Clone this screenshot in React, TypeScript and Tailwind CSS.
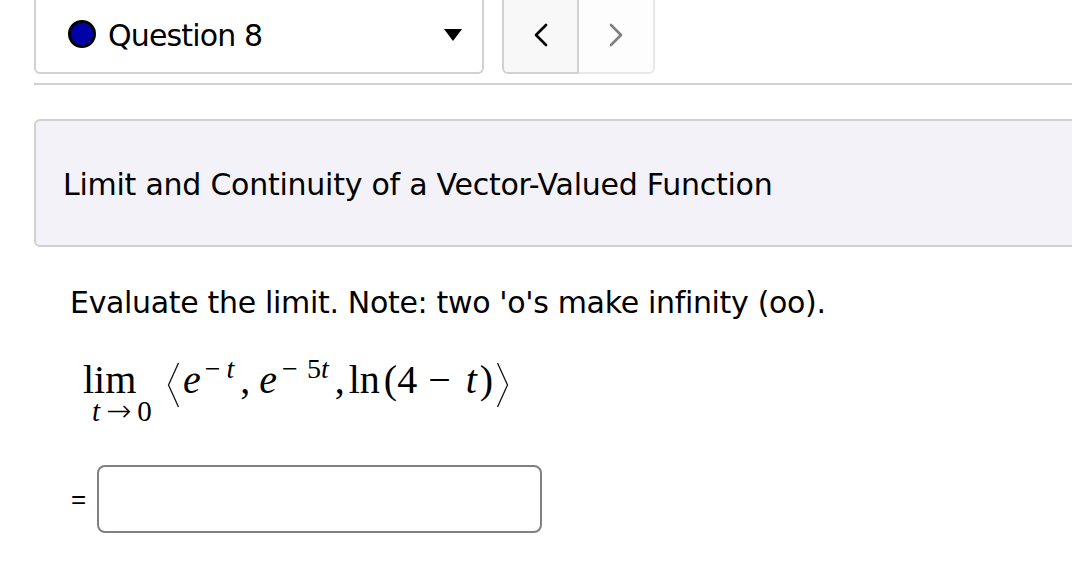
import { ChevronLeft, ChevronRight } from "lucide-react"

const serif = "font-['Liberation_Serif','Times_New_Roman',serif]"

function AngleBracket({ flip }: { flip?: boolean }) {
  return (
    <svg width="13" height="46" viewBox="0 0 13 46" className={flip ? "-scale-x-100" : ""}>
      <path d="M11.5 1 L1.5 23 L11.5 45" fill="none" stroke="#111" strokeWidth="1.3" />
    </svg>
  )
}

export default function App() {
  return (
    <div className="h-[563px] w-[1072px] overflow-hidden bg-white pl-[34px] font-['DejaVu_Sans',sans-serif] text-black">
      {/* Question selector */}
      <div className="flex h-[85px] items-start border-b-2 border-[#d1d1d1]">
        <div className="-mt-[5px] flex h-[79px] w-[450px] items-center justify-between rounded-md border-2 border-[#d1d1d1] pb-[2px] pl-[32px] pr-[20px]">
          <div className="flex items-center gap-[12px]">
            <span className="h-[28px] w-[28px] rounded-full border-[3px] border-black bg-[#0000a8]" />
            <span className="pt-[5px] text-[30px] leading-none tracking-[-0.85px]">Question 8</span>
          </div>
          <span className="mt-[3px] h-0 w-0 border-x-[9px] border-t-[12px] border-x-transparent border-t-black" />
        </div>
        <div className="-mt-[5px] ml-[18px] flex h-[79px]">
          <button className="flex w-[77px] items-center justify-center rounded-l-md border-2 border-[#d1d1d1] bg-[#f8f8f8]">
            <ChevronLeft className="h-[40px] w-[40px] text-black" strokeWidth={1.6} />
          </button>
          <button className="flex w-[76px] items-center justify-center rounded-r-md border-2 border-l-0 border-[#e8e8e8] bg-[#fdfdfd]">
            <ChevronRight className="h-[40px] w-[40px] text-[#808080]" strokeWidth={1.6} />
          </button>
        </div>
      </div>

      {/* Question title */}
      <div className="-mr-[10px] mt-[34px] flex h-[128px] items-center rounded-md border-2 border-[#d1d1d1] bg-[#f2f2f8] pl-[27px] pt-[4px]">
        <h2 className="text-[30px] font-normal leading-none tracking-[-0.25px]">
          Limit and Continuity of a Vector-Valued Function
        </h2>
      </div>

      {/* Question body */}
      <p className="ml-[36px] mt-[41px] text-[30px] leading-none tracking-[-0.33px]">
        Evaluate the limit. Note: two 'o's make infinity (oo).
      </p>

      <div className={`ml-[49px] mt-[43px] flex h-[74px] items-start ${serif} text-[40px] leading-[36px]`}>
        <div className="flex w-[84px] flex-col items-start pt-[1px]">
          <span>lim</span>
          <span className="ml-[9px] mt-[1px] flex items-center whitespace-nowrap text-[29px] leading-[24px]">
            <i>t</i>
            <span className="mx-[6px] font-['DejaVu_Sans',sans-serif] text-[30px] font-light">→</span>0
          </span>
        </div>
        <div className="flex items-start">
          <div className="pt-[1px]">
            <AngleBracket />
          </div>
          <div className="ml-[3px] whitespace-nowrap pt-[1px]">
            <i>e</i>
            <span className="ml-[4px] align-[15px] text-[28px] leading-[10px]">
              −<i className="ml-[6px]">t</i>
            </span>
            <span className="ml-[6px]">,</span>
            <i className="ml-[9px]">e</i>
            <span className="ml-[5px] align-[15px] text-[28px] leading-[10px]">
              −<span className="ml-[9px]">5</span>
              <i>t</i>
            </span>
            <span className="ml-[6px]">,</span>
            <span className="ml-[4px]">ln</span>
            <span className="ml-[4px]">(4</span>
            <span className="ml-[11px]">−</span>
            <i className="ml-[15px]">t</i>
            <span className="ml-[3px]">)</span>
          </div>
          <div className="ml-[3px] pt-[1px]">
            <AngleBracket flip />
          </div>
        </div>
      </div>

      {/* Answer row */}
      <div className="ml-[37px] mt-[30px] flex items-center gap-[12px]">
        <span className="w-[14px] font-['Liberation_Sans',sans-serif] text-[26px] leading-none">=</span>
        <input
          type="text"
          aria-label="Answer"
          className="h-[68px] w-[445px] rounded-lg border-2 border-[#808080] bg-white"
        />
      </div>
    </div>
  )
}
